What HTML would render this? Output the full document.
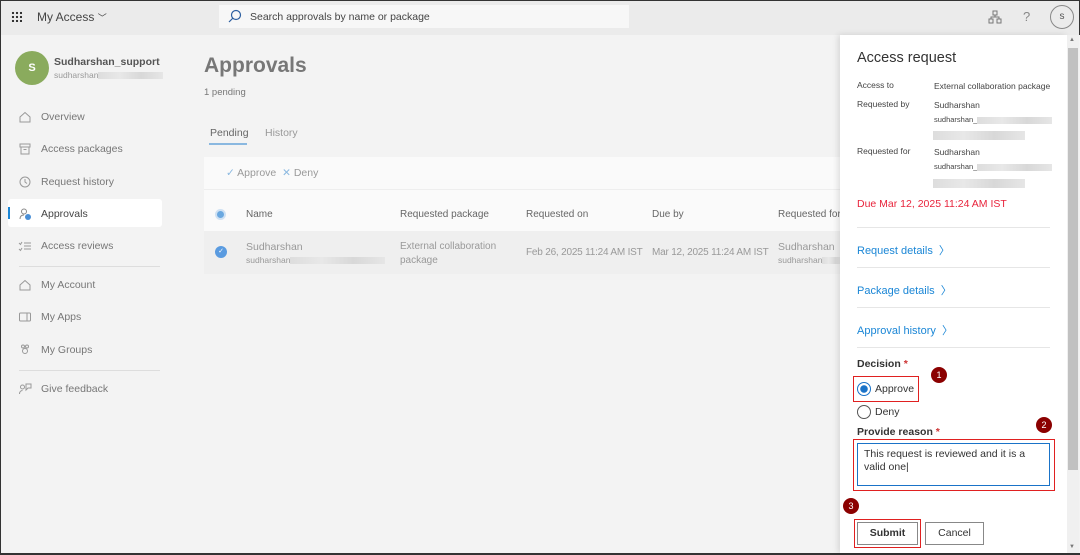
<!DOCTYPE html>
<html><head><meta charset="utf-8"><style>
*{box-sizing:border-box;margin:0;padding:0}
body{width:1080px;height:555px;overflow:hidden;font-family:"Liberation Sans",sans-serif;background:#f3f3f3;position:relative;color:#555}
.a{position:absolute}
.top{left:0;top:0;width:1080px;height:35px;background:#ebebeb;border:1px solid #333;border-bottom:none}
.blur{display:inline-block;height:7px;background:linear-gradient(90deg,#ddd,#e8e8e8,#d8d8d8,#e6e6e6);vertical-align:middle}
.nav{left:18px;font-size:10.5px;color:#777}
.nav svg{position:absolute;left:0;top:-1px}
.nav span{position:absolute;left:23px;white-space:nowrap}
.th{font-size:10px;color:#666;top:209px;white-space:nowrap}
.td{font-size:10px;color:#999;white-space:nowrap}
.p{font-size:8.5px;color:#444}
.lnk{left:857px;font-size:11px;color:#1a86d6}
.hr{left:857px;width:193px;height:1px;background:#e6e6e6}
.red{border:1.5px solid #e02020}
.num{width:16px;height:16px;border-radius:50%;background:#8b0000;color:#fff;font-size:9px;text-align:center;line-height:16px}
</style></head><body>
<div class="a top"></div>
<div class="a" style="left:11px;top:11px;width:11px;height:11px;background:radial-gradient(circle,#333 1.1px,transparent 1.3px) 0 0/4px 4px"></div>
<div class="a" style="left:37px;top:10px;font-size:12px;color:#444">My Access <span style="font-size:9px">﹀</span></div>
<div class="a" style="left:219px;top:5px;width:410px;height:23px;background:#f7f7f7"></div>
<svg class="a" style="left:228px;top:9px" width="14" height="14"><circle cx="8" cy="6" r="4.5" fill="none" stroke="#2d5fa0" stroke-width="1.2"/><line x1="5" y1="9" x2="1" y2="13" stroke="#2d5fa0" stroke-width="1.2"/></svg>
<div class="a" style="left:250px;top:11px;font-size:10.5px;color:#444">Search approvals by name or package</div>
<svg class="a" style="left:988px;top:10px" width="14" height="14"><rect x="5" y="1" width="4" height="4" fill="none" stroke="#777"/><rect x="1" y="9" width="4" height="4" fill="none" stroke="#777"/><rect x="9" y="9" width="4" height="4" fill="none" stroke="#777"/><path d="M7 5V7M3 9V7H11V9" fill="none" stroke="#777"/></svg>
<div class="a" style="left:1023px;top:9px;font-size:13px;color:#888">?</div>
<div class="a" style="left:1050px;top:5px;width:24px;height:24px;border:1px solid #888;border-radius:50%;font-size:10px;text-align:center;line-height:22px;color:#555">s</div>
<div class="a" style="left:0;top:35px;width:1px;height:520px;background:#333"></div>
<div class="a" style="left:0;top:553px;width:1080px;height:2px;background:#333"></div>

<div class="a" style="left:15px;top:51px;width:34px;height:34px;border-radius:50%;background:#8aab5d;color:#fff;font-size:11px;text-align:center;line-height:34px;font-weight:bold">S</div>
<div class="a" style="left:54px;top:56px;font-size:10.5px;color:#555;font-weight:bold">Sudharshan_support</div>
<div class="a" style="left:54px;top:70px;font-size:8.5px;color:#999">sudharshan<span class="blur" style="width:65px"></span></div>

<div class="a nav" style="top:111px"><svg width="14" height="14"><path d="M2 7L7 2.5L12 7V12H2Z" fill="none" stroke="#999"/></svg><span>Overview</span></div>
<div class="a nav" style="top:143px"><svg width="14" height="14"><rect x="2" y="2" width="10" height="3" fill="none" stroke="#999"/><path d="M3 5V12H11V5M5.5 7.5H8.5" fill="none" stroke="#999"/></svg><span>Access packages</span></div>
<div class="a nav" style="top:176px"><svg width="14" height="14"><circle cx="7" cy="7" r="5" fill="none" stroke="#999"/><path d="M7 4V7L9 8.5" fill="none" stroke="#999"/></svg><span>Request history</span></div>
<div class="a" style="left:8px;top:199px;width:154px;height:28px;background:#fff;border-radius:3px"></div>
<div class="a" style="left:8px;top:207px;width:2px;height:12px;background:#1a86d6"></div>
<div class="a nav" style="top:208px"><svg width="14" height="14"><circle cx="6" cy="4.5" r="2.5" fill="none" stroke="#888"/><path d="M2 12C2 9 4 8 6 8" fill="none" stroke="#888"/><circle cx="10" cy="10" r="3" fill="#4a8fd6"/></svg><span style="color:#444">Approvals</span></div>
<div class="a nav" style="top:240px"><svg width="14" height="14"><path d="M1 4L2.5 5.5L4 3M6 4H13M1 10L2.5 11.5L4 9M6 7H13M6 10H13" fill="none" stroke="#999"/></svg><span>Access reviews</span></div>
<div class="a" style="left:19px;top:266px;width:141px;height:1px;background:#ddd"></div>
<div class="a nav" style="top:279px"><svg width="14" height="14"><path d="M2 7L7 2.5L12 7V12H2Z" fill="none" stroke="#999"/></svg><span>My Account</span></div>
<div class="a nav" style="top:311px"><svg width="14" height="14"><rect x="1.5" y="3" width="11" height="8" rx="1" fill="none" stroke="#999"/><line x1="9" y1="3" x2="9" y2="11" stroke="#999"/></svg><span>My Apps</span></div>
<div class="a nav" style="top:344px"><svg width="14" height="14"><circle cx="5" cy="3.5" r="1.5" fill="none" stroke="#999"/><circle cx="9" cy="3.5" r="1.5" fill="none" stroke="#999"/><circle cx="7" cy="8" r="2.5" fill="none" stroke="#999"/></svg><span>My Groups</span></div>
<div class="a" style="left:19px;top:370px;width:141px;height:1px;background:#ddd"></div>
<div class="a nav" style="top:383px"><svg width="14" height="14"><circle cx="4.5" cy="5" r="2" fill="none" stroke="#999"/><path d="M1.5 12C1.5 9.5 3 8.5 4.5 8.5M8 2H13V6H10L8 8Z" fill="none" stroke="#999"/></svg><span>Give feedback</span></div>

<div class="a" style="left:204px;top:54px;font-size:21px;color:#777;font-weight:bold">Approvals</div>
<div class="a" style="left:204px;top:87px;font-size:9.5px;color:#777">1 pending</div>
<div class="a" style="left:210px;top:127px;font-size:10.5px;color:#666">Pending</div>
<div class="a" style="left:209px;top:143px;width:38px;height:2px;background:#8ab8e0"></div>
<div class="a" style="left:265px;top:127px;font-size:10.5px;color:#999">History</div>
<div class="a" style="left:204px;top:157px;width:636px;height:32px;background:#fafafa"></div>
<div class="a" style="left:226px;top:167px;font-size:10.5px;color:#999"><span style="color:#8ab8e0">✓</span> Approve &nbsp;<span style="color:#8ab8e0">✕</span> Deny</div>
<div class="a" style="left:204px;top:189px;width:636px;height:1px;background:#eee"></div>
<div class="a" style="left:204px;top:190px;width:636px;height:41px;background:#fafafa"></div>
<div class="a" style="left:215px;top:209px;width:11px;height:11px;border-radius:50%;background:#6aa8e0;border:2px solid #cfe1f3"></div>
<div class="a th" style="left:246px">Name</div>
<div class="a th" style="left:400px">Requested package</div>
<div class="a th" style="left:526px">Requested on</div>
<div class="a th" style="left:652px">Due by</div>
<div class="a th" style="left:778px">Requested for</div>
<div class="a" style="left:204px;top:231px;width:636px;height:43px;background:#efefef"></div>
<div class="a" style="left:215px;top:246px;width:12px;height:12px;border-radius:50%;background:#5a9be0;color:#fff;font-size:7px;text-align:center;line-height:12px">✓</div>
<div class="a td" style="left:246px;top:241px;font-size:10.5px">Sudharshan</div>
<div class="a td" style="left:246px;top:255px;font-size:8.5px">sudharshan<span class="blur" style="width:95px"></span></div>
<div class="a td" style="left:400px;top:240px;line-height:14px">External collaboration<br>package</div>
<div class="a td" style="left:526px;top:247px;letter-spacing:-0.2px">Feb 26, 2025 11:24 AM IST</div>
<div class="a td" style="left:652px;top:247px;letter-spacing:-0.2px">Mar 12, 2025 11:24 AM IST</div>
<div class="a td" style="left:778px;top:241px;font-size:10.5px">Sudharshan</div>
<div class="a td" style="left:778px;top:255px;font-size:8.5px">sudharshan<span class="blur" style="width:20px"></span></div>

<div class="a" style="left:840px;top:35px;width:227px;height:518px;background:#fff;box-shadow:-2px 0 6px rgba(0,0,0,.12)"></div>
<div class="a" style="left:1067px;top:35px;width:12px;height:518px;background:#f0f0f0"></div>
<div class="a" style="left:1068px;top:48px;width:10px;height:422px;background:#c1c1c1"></div>
<div class="a" style="left:1069px;top:37px;font-size:6px;color:#777">▲</div>
<div class="a" style="left:1069px;top:544px;font-size:6px;color:#777">▼</div>
<div class="a" style="left:857px;top:50px;font-size:14.5px;color:#333">Access request</div>
<div class="a p" style="left:857px;top:80px">Access to</div>
<div class="a p" style="left:934px;top:81px">External collaboration package</div>
<div class="a p" style="left:857px;top:99px">Requested by</div>
<div class="a p" style="left:934px;top:100px">Sudharshan</div>
<div class="a p" style="left:934px;top:115px;font-size:7.5px">sudharshan_<span class="blur" style="width:75px"></span></div>
<div class="a" style="left:933px;top:127px"><span class="blur" style="width:92px;height:9px"></span></div>
<div class="a p" style="left:857px;top:146px">Requested for</div>
<div class="a p" style="left:934px;top:147px">Sudharshan</div>
<div class="a p" style="left:934px;top:162px;font-size:7.5px">sudharshan_<span class="blur" style="width:75px"></span></div>
<div class="a" style="left:933px;top:175px"><span class="blur" style="width:92px;height:9px"></span></div>
<div class="a" style="left:857px;top:198px;font-size:10.5px;color:#e8243c">Due Mar 12, 2025 11:24 AM IST</div>
<div class="a hr" style="top:227px"></div>
<div class="a lnk" style="top:242px">Request details &nbsp;〉</div>
<div class="a hr" style="top:267px"></div>
<div class="a lnk" style="top:282px">Package details &nbsp;〉</div>
<div class="a hr" style="top:307px"></div>
<div class="a lnk" style="top:322px">Approval history &nbsp;〉</div>
<div class="a hr" style="top:347px"></div>
<div class="a" style="left:857px;top:358px;font-size:10.5px;color:#333;font-weight:bold">Decision <span style="color:#c33">*</span></div>
<div class="a red" style="left:853px;top:376px;width:66px;height:26px"></div>
<div class="a" style="left:857px;top:382px;width:14px;height:14px;border-radius:50%;border:1px solid #1a73c8;background:radial-gradient(circle,#1a73c8 3.5px,#fff 4px)"></div>
<div class="a" style="left:875px;top:383px;font-size:10.5px;color:#333">Approve</div>
<div class="a num" style="left:931px;top:367px">1</div>
<div class="a" style="left:857px;top:405px;width:14px;height:14px;border-radius:50%;border:1px solid #555"></div>
<div class="a" style="left:875px;top:406px;font-size:10.5px;color:#333">Deny</div>
<div class="a" style="left:857px;top:426px;font-size:10.5px;color:#333;font-weight:bold">Provide reason <span style="color:#c33">*</span></div>
<div class="a num" style="left:1036px;top:417px">2</div>
<div class="a red" style="left:853px;top:439px;width:202px;height:52px"></div>
<div class="a" style="left:857px;top:443px;width:193px;height:43px;border:1px solid #1a73c8;font-size:10.5px;color:#333;padding:4px 6px;line-height:13px">This request is reviewed and it is a valid one|</div>
<div class="a num" style="left:843px;top:498px">3</div>
<div class="a red" style="left:854px;top:519px;width:67px;height:29px"></div>
<div class="a" style="left:857px;top:522px;width:61px;height:23px;border:1px solid #888;font-size:10.5px;color:#333;font-weight:bold;text-align:center;line-height:21px">Submit</div>
<div class="a" style="left:925px;top:522px;width:59px;height:23px;border:1px solid #888;font-size:10.5px;color:#333;text-align:center;line-height:21px">Cancel</div>
</body></html>
